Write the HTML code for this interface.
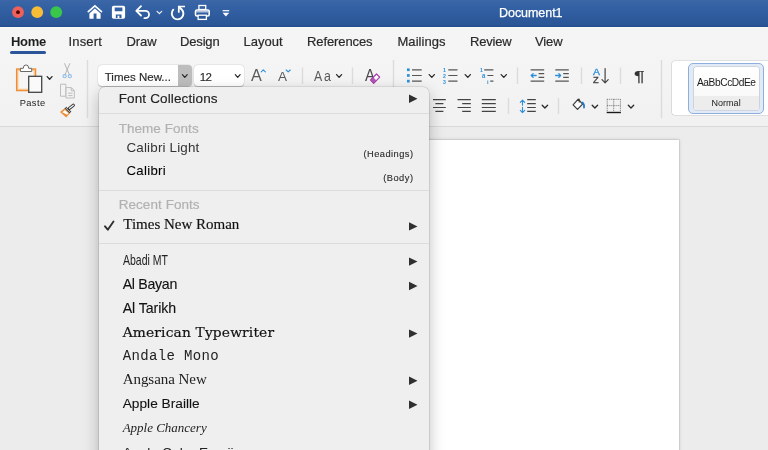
<!DOCTYPE html>
<html lang="en"><head><meta charset="utf-8"><title>Document1</title>
<style>
html,body{margin:0;padding:0}
body{width:768px;height:450px;overflow:hidden;position:relative;background:#ececec;font-family:"Liberation Sans",sans-serif}
.t{position:absolute;white-space:pre;line-height:1;font-family:"Liberation Sans",sans-serif}
.sf{font-family:"Liberation Serif",serif}
.mo{font-family:"Liberation Mono",monospace}
.ds{font-family:"DejaVu Serif",serif}
.dc{font-family:"DejaVu Sans Condensed",sans-serif}
.abs{position:absolute}
.layer{position:absolute;left:0;top:0;width:768px;height:450px;will-change:transform;transform:translateZ(0)}
#titlebar{left:0;top:0;width:768px;height:27px;background:linear-gradient(#3b66a7 0,#3260a2 35%,#2a5597 92%,#254d8b 100%)}
#ribbon{left:0;top:27px;width:768px;height:99px;background:linear-gradient(#fbfbfb 0,#f5f5f5 1.5px,#f4f4f4 45px,#f1f1f1 100%)}
#ribbonline{left:0;top:125.5px;width:768px;height:1.5px;background:#d9d9d9}
#docarea{left:0;top:127px;width:768px;height:323px;background:#ececec}
#page{left:300px;top:140.2px;width:379.2px;height:320px;background:#fff;box-shadow:0 0 0 .6px rgba(0,0,0,.12),0 0 4px rgba(0,0,0,.16)}
#homeline{left:10.3px;top:50.9px;width:36.1px;height:3px;border-radius:1.5px;background:#2b579a}
#fontbox{left:98.4px;top:65px;width:93.2px;height:20.8px;border-radius:4px;background:#fff;box-shadow:0 0 0 .5px rgba(0,0,0,.07),0 .5px 1px rgba(0,0,0,.22);overflow:hidden}
#fontbtn{left:79.6px;top:0;width:13.7px;height:20.8px;background:#bdbdbd}
#sizebox{left:193.8px;top:65px;width:50.6px;height:20.8px;border-radius:4px;background:#fff;box-shadow:0 0 0 .5px rgba(0,0,0,.07),0 .5px 1px rgba(0,0,0,.22)}
#gallery{left:671.8px;top:61.2px;width:110px;height:54px;border-radius:3px;background:#fff;box-shadow:0 0 0 .6px rgba(0,0,0,.16)}
#stylesel{left:688.2px;top:62.6px;width:76px;height:51.2px;border-radius:5px;background:#e2eaf6;border:1px solid #8eafde;box-sizing:border-box}
#stylecard{left:693.6px;top:66.7px;width:65.8px;height:43.8px;border-radius:2.5px;background:linear-gradient(#fff,#f6f6f6);box-shadow:0 0 0 .6px rgba(0,0,0,.17);overflow:hidden}
#stylelabel{left:0;top:29.2px;width:65.9px;height:14.6px;background:#ededed}
#menu{left:98.5px;top:86.7px;width:330.5px;height:380px;border-radius:6px 6px 0 0;background:#efefef;box-shadow:0 0 0 .6px rgba(0,0,0,.17),0 6px 16px rgba(0,0,0,.26)}
.sep{position:absolute;left:98.5px;width:330.5px;height:1.4px;background:#dcdcdc}
svg{position:absolute;left:0;top:0;overflow:visible}
</style></head><body>
<div id="titlebar" class="abs"></div>
<div id="ribbon" class="abs"></div>
<div id="ribbonline" class="abs"></div>
<div id="docarea" class="abs"></div>
<div id="page" class="abs"></div>
<div id="homeline" class="abs"></div>
<div id="fontbox" class="abs"><div id="fontbtn" class="abs"></div></div>
<div id="sizebox" class="abs"></div>
<div id="gallery" class="abs"></div>
<div id="stylesel" class="abs"></div>
<div id="stylecard" class="abs"><div id="stylelabel" class="abs"></div></div>
<svg width="768" height="450" viewBox="0 0 768 450" fill="none">
<!-- traffic lights -->
<circle cx="18" cy="12.2" r="5.9" fill="#f0605a"/><circle cx="18" cy="12.2" r="1.9" fill="#4d0503"/>
<circle cx="37.2" cy="12.2" r="5.9" fill="#f8bd37"/>
<circle cx="56.2" cy="12.2" r="5.9" fill="#38c64b"/>
<!-- home -->
<g id="i-home">
<path d="M88.3 11.7 L94.9 5.9 L101.5 11.7" stroke="#fff" stroke-width="1.7" stroke-linecap="round" stroke-linejoin="miter"/>
<path d="M89.4 13.4 L94.9 8.5 L100.6 13.4 V18.8 H96.5 V13.5 H93.6 V18.8 H89.4 Z" fill="#fff"/>
</g>
<!-- save -->
<g id="i-save">
<path d="M113.7 5.7 H123.3 Q125.1 5.7 125.1 7.5 V17 Q125.1 18.8 123.3 18.8 H113.7 Q111.9 18.8 111.9 17 V7.5 Q111.9 5.7 113.7 5.7 Z M114.7 7.5 V11.2 H122.4 V7.5 Z M115.8 14.5 V17.9 H121.5 V14.5 Z" fill="#fff" fill-rule="evenodd"/>
<rect x="117.5" y="15.7" width="1.9" height="2.5" fill="#fff"/>
</g>
<!-- undo -->
<g id="i-undo" stroke="#fff" stroke-width="1.8" stroke-linecap="round" stroke-linejoin="round">
<path d="M141 6.2 L136.3 10.9 L141 15.5"/>
<path d="M136.8 10.9 H145.4 A3.65 3.65 0 0 1 145.4 18.2 H144.4"/>
</g>
<path d="M157.1 11.3 L159.4 13.7 L161.7 11.3" stroke="#fff" stroke-width="1.2" stroke-linecap="round" stroke-linejoin="round" opacity=".9"/>
<!-- repeat -->
<g id="i-redo" stroke="#fff" stroke-linecap="butt">
<path d="M173.3 9.7 A5.8 5.8 0 1 0 181.7 9.5 L179.2 7" stroke-width="1.9" stroke-linecap="round"/>
<path d="M178.8 12.8 V6.5 H185" stroke-width="1.7"/>
</g>
<!-- print -->
<g id="i-print" stroke="#fff">
<rect x="198.9" y="5.5" width="6.8" height="4" stroke-width="1.3"/>
<rect x="195.5" y="10" width="13.7" height="6" rx="1.6" stroke-width="1.6"/>
<path d="M196.3 11.8 H208.4" stroke-width="1.3" opacity=".75"/>
<rect x="198.1" y="15.2" width="8.3" height="4.2" stroke-width="1.3" fill="#2c5899"/>
</g>
<!-- customize -->
<path d="M222.6 10.7 H229.2" stroke="#fff" stroke-width="1.2"/>
<path d="M222.6 12.8 H229.2 L225.9 16.6 Z" fill="#fff"/>

<!-- separators -->
<g stroke="#dcdcdc" stroke-width="1.4">
<path d="M87.5 60 V118"/><path d="M393.5 60 V118"/><path d="M661.5 60 V118"/>
<path d="M302.5 67.5 V84"/><path d="M352.5 67.5 V84"/><path d="M517.5 67.5 V84"/><path d="M581.5 67.5 V84"/><path d="M620.5 67.5 V84"/>
<path d="M508.5 98 V114"/><path d="M558.5 98 V114"/>
</g>

<!-- paste -->
<g id="i-paste">
<rect x="16.6" y="69" width="19" height="21.6" fill="#f9cb96" stroke="#ee8d33" stroke-width="1.3"/>
<rect x="18.5" y="70.9" width="15.2" height="17.8" fill="#f5f5f5"/>
<path d="M20.4 71.5 V68.3 H23.3 Q23.3 64.9 26 64.9 Q28.7 64.9 28.7 68.3 H31.7 V71.5 Z" fill="#fff" stroke="#6a6a6a" stroke-width="1"/>
<rect x="28.7" y="76.3" width="13" height="16" fill="#fafafa" stroke="#444" stroke-width="1.3"/>
</g>
<path d="M47.2 76.6 L49.6 79.2 L52 76.6" stroke="#2a2a2a" stroke-width="1.3" stroke-linecap="round" stroke-linejoin="round"/>
<!-- scissors (disabled) -->
<g id="i-cut" stroke-width="1">
<path d="M64.5 63.3 L69.4 74.7 M69.9 63.3 L65 74.7" stroke="#b4b4b4"/>
<circle cx="64.6" cy="76.2" r="1.6" stroke="#8fbde8" stroke-width="1.1"/><circle cx="69.8" cy="76.2" r="1.6" stroke="#8fbde8" stroke-width="1.1"/>
</g>
<!-- copy (disabled) -->
<g id="i-copy" stroke="#bcbcbc" stroke-width="1" fill="#f3f3f3">
<path d="M60.5 84.2 H65.9 V96.2 H60.5 Z"/>
<path d="M66 87.6 H71.4 L74.3 90.5 V98 H66 Z" />
<path d="M71.2 87.8 V90.7 H74.1" fill="none"/>
<path d="M68.2 93.2 H72.5 M68.2 95.6 H72.5" />
</g>
<!-- format painter -->
<g id="i-fmt">
<path d="M60 112 L64.7 108.2 L69.8 113.2 L66.3 117.4 Z" fill="#ee8d33"/>
<path d="M62.2 112.3 L65 110 L68.3 113.2 L67.2 114.8 Z" fill="#fff"/>
<path d="M65.3 107.5 L70.6 112.6" stroke="#3c3c3c" stroke-width="2.3"/>
<path d="M65.3 107.5 L70.6 112.6" stroke="#f3f3f3" stroke-width=".7"/>
<path d="M69.3 108.4 L73.3 105.3" stroke="#3c3c3c" stroke-width="3.2" stroke-linecap="round"/>
<path d="M69.5 108.2 L73.3 105.3" stroke="#f3f3f3" stroke-width="1.3" stroke-linecap="round"/>
</g>

<!-- chevrons in boxes -->
<path d="M182.4 74.7 L184.8 77.4 L187.2 74.7" stroke="#2a2a2a" stroke-width="1.25" stroke-linecap="round" stroke-linejoin="round"/>
<path d="M235.3 74.7 L237.7 77.4 L240.1 74.7" stroke="#2a2a2a" stroke-width="1.25" stroke-linecap="round" stroke-linejoin="round"/>

<!-- grow / shrink font -->
<path d="M261.2 71.8 L263.3 69.9 L265.4 71.8" stroke="#2b8fdb" stroke-width="1.1" stroke-linecap="round" stroke-linejoin="round"/>
<path d="M286.2 70 L288.2 71.9 L290.2 70" stroke="#2b8fdb" stroke-width="1.1" stroke-linecap="round" stroke-linejoin="round"/>
<!-- Aa chevron -->
<path d="M336.6 74.6 L339.1 77.4 L341.6 74.6" stroke="#2a2a2a" stroke-width="1.3" stroke-linecap="round" stroke-linejoin="round"/>
<!-- clear formatting -->
<!-- bullets -->
<g id="i-bul">
<g fill="#2b8fdb"><rect x="407" y="68.4" width="2.7" height="2.7"/><rect x="407" y="74.1" width="2.7" height="2.7"/><rect x="407" y="79.8" width="2.7" height="2.7"/></g>
<path d="M412 69.8 H421.7 M412 75.5 H421.7 M412 81.2 H421.7" stroke="#555" stroke-width="1.2"/>
</g>
<path d="M429.2 74.6 L431.8 77.4 L434.4 74.6" stroke="#2a2a2a" stroke-width="1.3" stroke-linecap="round" stroke-linejoin="round"/>
<!-- numbering -->
<g id="i-num">
<path d="M448.3 69.8 H457.5 M448.3 75.5 H457.5 M448.3 81.2 H457.5" stroke="#555" stroke-width="1.2"/>
</g>
<path d="M465.2 74.6 L467.8 77.4 L470.4 74.6" stroke="#2a2a2a" stroke-width="1.3" stroke-linecap="round" stroke-linejoin="round"/>
<!-- multilevel -->
<g id="i-ml">
<path d="M484.2 69.8 H493.4 M487.4 75.5 H493.4 M490.2 81.2 H493.4" stroke="#555" stroke-width="1.2"/>
</g>
<path d="M501.2 74.6 L503.8 77.4 L506.4 74.6" stroke="#2a2a2a" stroke-width="1.3" stroke-linecap="round" stroke-linejoin="round"/>

<!-- decrease indent -->
<g id="i-dec">
<path d="M530.6 69.8 H544.2 M538.6 73.6 H544.2 M538.6 77.4 H544.2 M530.6 81.2 H544.2" stroke="#555" stroke-width="1.2"/>
<path d="M536.2 75.5 H531.4 M533.1 73.6 L531.2 75.5 L533.1 77.4" stroke="#2b8fdb" stroke-width="1.3" stroke-linecap="round" stroke-linejoin="round"/>
</g>
<g id="i-inc">
<path d="M555.3 69.8 H568.8 M563.2 73.6 H568.8 M563.2 77.4 H568.8 M555.3 81.2 H568.8" stroke="#555" stroke-width="1.2"/>
<path d="M555.7 75.5 H560.5 M558.8 73.6 L560.7 75.5 L558.8 77.4" stroke="#2b8fdb" stroke-width="1.3" stroke-linecap="round" stroke-linejoin="round"/>
</g>
<!-- sort -->
<g id="i-sort">
<path d="M605.1 68.6 V82.6 M602 79.7 L605.1 82.9 L608.2 79.7" stroke="#444" stroke-width="1.2" stroke-linecap="round" stroke-linejoin="round"/>
</g>

<!-- row 2: align center / right / justify -->
<path d="M433 99.7 H445.8 M435.4 103.6 H443.4 M433 107.5 H445.8 M435.4 111.4 H443.4" stroke="#444" stroke-width="1.2"/>
<path d="M457.5 99.7 H470.8 M462.2 103.6 H470.8 M457.5 107.5 H470.8 M462.2 111.4 H470.8" stroke="#444" stroke-width="1.2"/>
<path d="M481.8 99.7 H495.8 M481.8 103.6 H495.8 M481.8 107.5 H495.8 M481.8 111.4 H495.8" stroke="#444" stroke-width="1.2"/>
<!-- line spacing -->
<g id="i-ls">
<path d="M522.5 100.2 V105.3 M522.5 107.3 V112.6 M520.3 102.4 L522.5 100.1 L524.7 102.4 M520.3 110.4 L522.5 112.7 L524.7 110.4" stroke="#2b8fdb" stroke-width="1.1" stroke-linecap="round" stroke-linejoin="round"/>
<path d="M527.2 99.7 H535.8 M527.2 103.6 H535.8 M527.2 107.5 H535.8 M527.2 111.4 H535.8" stroke="#444" stroke-width="1.2"/>
</g>
<path d="M542.2 105.2 L544.9 108 L547.6 105.2" stroke="#2a2a2a" stroke-width="1.3" stroke-linecap="round" stroke-linejoin="round"/>
<!-- shading bucket -->
<g id="i-bucket">
<path d="M573.1 104.8 L578.2 99.2 L582.6 104.1 L577.5 109.4 Z" fill="#fbfbfb" stroke="#3a3a3a" stroke-width="1.2" stroke-linejoin="round"/>
<path d="M579.2 98.7 V102.6" stroke="#3a3a3a" stroke-width="1.1"/>
<path d="M582.3 102.4 Q584.6 104 584 107.6" stroke="#1e78cf" stroke-width="1.7" stroke-linecap="round"/>
</g>
<path d="M592.2 105.2 L594.9 108 L597.6 105.2" stroke="#2a2a2a" stroke-width="1.3" stroke-linecap="round" stroke-linejoin="round"/>
<!-- borders -->
<g id="i-bord">
<path d="M607.2 99.3 H620.4 M607.2 105.6 H620.4 M607.2 99.3 V112 M613.7 99.3 V112 M620.4 99.3 V112" stroke="#6a6a6a" stroke-width="1" stroke-dasharray="1 1.1"/>
<path d="M606.7 112.5 H620.9" stroke="#1a1a1a" stroke-width="1.4"/>
</g>
<path d="M628.3 105.2 L631 108 L633.7 105.2" stroke="#2a2a2a" stroke-width="1.3" stroke-linecap="round" stroke-linejoin="round"/>
</svg>

<div class="layer">
<span class="t" style="left:499.0px;top:7.40px;font-size:12.5px;color:#ffffff;letter-spacing:-0.049px;-webkit-text-stroke:.25px #fff;">Document1</span>
<span class="t" style="left:11.0px;top:35.30px;font-size:13px;color:#1e1e1e;letter-spacing:-0.281px;font-weight:700;">Home</span>
<span class="t" style="left:68.5px;top:35.30px;font-size:13px;color:#2a2a2a;letter-spacing:0.164px;-webkit-text-stroke:.2px #2a2a2a;">Insert</span>
<span class="t" style="left:126.5px;top:35.30px;font-size:13px;color:#2a2a2a;letter-spacing:-0.086px;-webkit-text-stroke:.2px #2a2a2a;">Draw</span>
<span class="t" style="left:180.0px;top:35.30px;font-size:13px;color:#2a2a2a;letter-spacing:-0.161px;-webkit-text-stroke:.2px #2a2a2a;">Design</span>
<span class="t" style="left:243.5px;top:35.30px;font-size:13px;color:#2a2a2a;letter-spacing:-0.008px;-webkit-text-stroke:.2px #2a2a2a;">Layout</span>
<span class="t" style="left:307.0px;top:35.30px;font-size:13px;color:#2a2a2a;letter-spacing:-0.098px;-webkit-text-stroke:.2px #2a2a2a;">References</span>
<span class="t" style="left:397.5px;top:35.30px;font-size:13px;color:#2a2a2a;letter-spacing:0.039px;-webkit-text-stroke:.2px #2a2a2a;">Mailings</span>
<span class="t" style="left:470.0px;top:35.30px;font-size:13px;color:#2a2a2a;letter-spacing:-0.188px;-webkit-text-stroke:.2px #2a2a2a;">Review</span>
<span class="t" style="left:535.0px;top:35.30px;font-size:13px;color:#2a2a2a;letter-spacing:-0.113px;-webkit-text-stroke:.2px #2a2a2a;">View</span>
<span class="t" style="left:19.7px;top:98.80px;font-size:9.3px;color:#1c1c1c;letter-spacing:0.404px;">Paste</span>
<span class="t" style="left:104.7px;top:71.80px;font-size:11.5px;color:#2a2a2a;letter-spacing:0.022px;-webkit-text-stroke:.15px #2a2a2a;">Times New...</span>
<span class="t" style="left:199.7px;top:71.60px;font-size:11.5px;color:#2a2a2a;letter-spacing:-0.598px;-webkit-text-stroke:.15px #2a2a2a;">12</span>
<span class="t" style="left:697.0px;top:77.80px;font-size:10.2px;color:#1a1a1a;letter-spacing:-0.426px;">AaBbCcDdEe</span>
<span class="t" style="left:711.5px;top:98.90px;font-size:9px;color:#1a1a1a;letter-spacing:0.031px;">Normal</span>
<span class="t" style="left:251.4px;top:67.50px;font-size:16.9px;color:#5a5a5a;transform:scaleX(0.957);transform-origin:0 0;">A</span>
<span class="t" style="left:277.6px;top:69.50px;font-size:13.3px;color:#5a5a5a;transform:scaleX(1.014);transform-origin:0 0;">A</span>
<span class="t" style="left:314.4px;top:69.80px;font-size:13.8px;color:#5a5a5a;transform:scaleX(0.891);transform-origin:0 0;">A</span>
<span class="t" style="left:323.7px;top:69.80px;font-size:13.8px;color:#5a5a5a;transform:scaleX(0.898);transform-origin:0 0;">a</span>
<span class="t" style="left:364.6px;top:66.50px;font-size:17px;color:#4a4a4a;transform:scaleX(0.882);transform-origin:0 0;">A</span>
<span class="t" style="left:593.1px;top:66.80px;font-size:9.4px;color:#2b8fdb;transform:scaleX(1.117);transform-origin:0 0;-webkit-text-stroke:.3px #2b8fdb;">A</span>
<span class="t" style="left:593.3px;top:76.40px;font-size:8.8px;color:#444;transform:scaleX(1.060);transform-origin:0 0;-webkit-text-stroke:.3px #444;">Z</span>
<span class="t" style="left:634.4px;top:68.40px;font-size:15.4px;color:#333;transform:scaleX(1.304);transform-origin:0 0;-webkit-text-stroke:.15px #333;">¶</span>
<span class="t" style="left:443.0px;top:68.00px;font-size:5.6px;color:#2b8fdb;font-weight:700;transform:scaleX(0.928);transform-origin:0 0;">1</span>
<span class="t" style="left:443.0px;top:74.00px;font-size:5.6px;color:#2b8fdb;font-weight:700;transform:scaleX(0.928);transform-origin:0 0;">2</span>
<span class="t" style="left:443.0px;top:80.00px;font-size:5.6px;color:#2b8fdb;font-weight:700;transform:scaleX(0.928);transform-origin:0 0;">3</span>
<span class="t" style="left:479.6px;top:68.00px;font-size:5.6px;color:#2b8fdb;font-weight:700;transform:scaleX(0.928);transform-origin:0 0;">1</span>
<span class="t" style="left:481.7px;top:73.00px;font-size:6.4px;color:#2b8fdb;font-weight:700;transform:scaleX(0.926);transform-origin:0 0;">a</span>
<span class="t" style="left:486.8px;top:80.00px;font-size:5.6px;color:#2b8fdb;font-weight:700;transform:scaleX(1.024);transform-origin:0 0;">i</span>
</div>
<svg width="768" height="450" viewBox="0 0 768 450" fill="none">
<path d="M376.5 74 L379.7 77.2 L373.7 83.3 L370.6 80 Z" fill="#fff" stroke="#a63dab" stroke-width="1.2" stroke-linejoin="round"/>
<path d="M370.6 80 L373.1 77.5 L376.2 80.7 L373.7 83.3 Z" fill="#b257b6" stroke="#a63dab" stroke-width=".6"/>
</svg>

<div id="menu" class="abs"></div>
<div class="sep" style="top:112.9px"></div>
<div class="sep" style="top:190px"></div>
<div class="sep" style="top:242.9px"></div>
<svg width="768" height="450" viewBox="0 0 768 450" fill="none">
<g fill="#303030" transform="translate(0 0.8)">
<path d="M409 93.7 L417.5 97.9 L409 102.1 Z"/>
<path d="M409 221.4 L417.5 225.6 L409 229.8 Z"/>
<path d="M409 256.6 L417.5 260.8 L409 265 Z"/>
<path d="M409 281 L417.5 285.2 L409 289.4 Z"/>
<path d="M409 328.6 L417.5 332.8 L409 337 Z"/>
<path d="M409 375.8 L417.5 380 L409 384.2 Z"/>
<path d="M409 399.8 L417.5 404 L409 408.2 Z"/>
</g>
<path d="M105 226.3 L107.8 229.7 L113.5 221.5" stroke="#303030" stroke-width="1.9" stroke-linecap="round" stroke-linejoin="round"/>
</svg>

<div class="layer">
<span class="t" style="left:118.7px;top:92.20px;font-size:13.5px;color:#222222;letter-spacing:0.138px;-webkit-text-stroke:.15px #222;">Font Collections</span>
<span class="t" style="left:118.7px;top:121.80px;font-size:13.5px;color:#b1b1b1;letter-spacing:0.043px;-webkit-text-stroke:.2px #b1b1b1;">Theme Fonts</span>
<span class="t" style="left:126.5px;top:141.20px;font-size:13.4px;color:#333;letter-spacing:0.175px;">Calibri Light</span>
<span class="t" style="left:363.5px;top:149.80px;font-size:9.3px;color:#2c2c2c;letter-spacing:0.452px;-webkit-text-stroke:.12px #2c2c2c;">(Headings)</span>
<span class="t" style="left:126.5px;top:164.30px;font-size:13.2px;color:#000;letter-spacing:0.304px;-webkit-text-stroke:.08px #000;">Calibri</span>
<span class="t" style="left:383.2px;top:173.60px;font-size:9.3px;color:#2c2c2c;letter-spacing:0.485px;-webkit-text-stroke:.12px #2c2c2c;">(Body)</span>
<span class="t" style="left:118.7px;top:198.20px;font-size:13.5px;color:#b1b1b1;letter-spacing:0.059px;-webkit-text-stroke:.2px #b1b1b1;">Recent Fonts</span>
<span class="t sf" style="left:123.3px;top:217.20px;font-size:15px;color:#111;letter-spacing:-0.008px;-webkit-text-stroke:.15px #111;">Times New Roman</span>
<span class="t" style="left:122.7px;top:252.50px;font-size:14.6px;color:#222222;transform:scaleX(0.721);transform-origin:0 0;">Abadi MT</span>
<span class="t" style="left:122.7px;top:277.00px;font-size:14.2px;color:#111;letter-spacing:-0.312px;-webkit-text-stroke:.12px #111;">Al Bayan</span>
<span class="t" style="left:122.7px;top:300.80px;font-size:14.2px;color:#111;letter-spacing:-0.095px;-webkit-text-stroke:.12px #111;">Al Tarikh</span>
<span class="t ds" style="left:122.7px;top:325.50px;font-size:13.8px;color:#111;letter-spacing:0.155px;-webkit-text-stroke:.2px #111;">American Typewriter</span>
<span class="t mo" style="left:122.7px;top:349.00px;font-size:14px;color:#222222;letter-spacing:0.353px;">Andale Mono</span>
<span class="t sf" style="left:122.7px;top:371.80px;font-size:15px;color:#222222;letter-spacing:-0.051px;">Angsana New</span>
<span class="t" style="left:122.7px;top:397.00px;font-size:13.7px;color:#111;letter-spacing:0.011px;-webkit-text-stroke:.1px #111;">Apple Braille</span>
<span class="t sf" style="left:122.7px;top:421.00px;font-size:13px;color:#222222;letter-spacing:-0.009px;font-style:italic;">Apple Chancery</span>
<span class="t" style="left:122.7px;top:445.50px;font-size:13.7px;color:#222222;letter-spacing:0.085px;">Apple Color Emoji</span>
</div>
</body></html>
